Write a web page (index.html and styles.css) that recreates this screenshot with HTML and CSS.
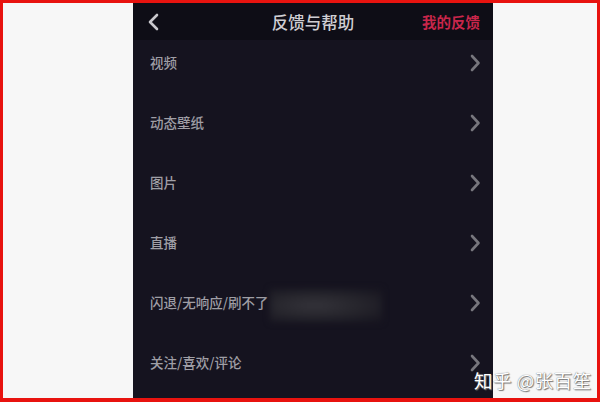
FILE: index.html
```html
<!DOCTYPE html>
<html lang="zh-CN">
<head>
    <meta charset="UTF-8">
    <meta name="viewport" content="width=device-width, initial-scale=1.0">
    <title>反馈与帮助</title>
    <link rel="stylesheet" href="styles.css">
</head>
<body>
    <div class="frame">
        <div class="phone">
            <!-- 顶部导航 -->
            <header class="topbar">
                <svg class="back" width="12" height="18" viewBox="0 0 12 18">
                    <path d="M10 2 L3 9 L10 16" fill="none" stroke="#c9c8cd" stroke-width="2.6" stroke-linecap="round" stroke-linejoin="round"/>
                </svg>
                <h1 class="title">反馈与帮助</h1>
                <span class="my-feedback">我的反馈</span>
            </header>

            <!-- 问题分类列表 -->
            <ul class="menu">
                <li class="menu-item"><span class="label">视频</span><svg class="arrow" viewBox="0 0 12 18"><path d="M3 2 L9.5 9 L3 16"/></svg></li>
                <li class="menu-item"><span class="label">动态壁纸</span><svg class="arrow" viewBox="0 0 12 18"><path d="M3 2 L9.5 9 L3 16"/></svg></li>
                <li class="menu-item"><span class="label">图片</span><svg class="arrow" viewBox="0 0 12 18"><path d="M3 2 L9.5 9 L3 16"/></svg></li>
                <li class="menu-item"><span class="label">直播</span><svg class="arrow" viewBox="0 0 12 18"><path d="M3 2 L9.5 9 L3 16"/></svg></li>
                <li class="menu-item"><span class="label">闪退/无响应/刷不了<span class="smudge"></span></span><svg class="arrow" viewBox="0 0 12 18"><path d="M3 2 L9.5 9 L3 16"/></svg></li>
                <li class="menu-item"><span class="label">关注/喜欢/评论</span><svg class="arrow" viewBox="0 0 12 18"><path d="M3 2 L9.5 9 L3 16"/></svg></li>
            </ul>
            <div class="bottom-line"></div>
        </div>
        <div class="watermark">知乎 @张百笙</div>
    </div>
</body>
</html>
```

FILE: styles.css
```css
body {
    margin: 0;
    padding: 0;
    font-family: "Noto Sans CJK SC", "Noto Sans", sans-serif;
}
.frame {
    position: relative;
    box-sizing: border-box;
    width: 600px;
    height: 402px;
    border: 3px solid #e8130f;
    border-bottom-width: 4px;
    background-color: #f7f7f7;
    padding-left: 130px;
    overflow: hidden;
}
.phone {
    width: 360px;
    height: 100%;
    background-color: #15131f;
    display: flex;
    flex-direction: column;
}
.topbar {
    height: 37px;
    flex-shrink: 0;
    background-color: #0e0d16;
    display: flex;
    align-items: center;
    position: relative;
    padding: 0 13px 0 14px;
}
.back {
    display: block;
}
.title {
    position: absolute;
    left: 0;
    right: 0;
    margin: 0;
    text-align: center;
    font-size: 16.5px;
    font-weight: 500;
    color: #cfced3;
    pointer-events: none;
}
.my-feedback {
    margin-left: auto;
    font-size: 14.5px;
    font-weight: 700;
    color: #c9264b;
}
.menu {
    list-style: none;
    margin: 0;
    padding: 0;
    flex: 1;
}
.menu-item {
    height: 60px;
    box-sizing: border-box;
    padding: 12px 12px 0 17px;
    display: flex;
    align-items: flex-start;
    justify-content: space-between;
}
.label {
    position: relative;
    font-size: 13.5px;
    line-height: 20px;
    font-weight: 500;
    color: #9f9ea5;
}
.smudge {
    position: absolute;
    left: 120px;
    top: -3px;
    width: 112px;
    height: 33px;
    background: radial-gradient(ellipse at 40% 50%, #34333a 0%, #27262d 45%, #17151f 100%);
    filter: blur(3px);
}
.arrow {
    width: 12px;
    height: 18px;
    margin-top: 2px;
    fill: none;
    stroke: #77767d;
    stroke-width: 2.6;
    stroke-linecap: round;
    stroke-linejoin: round;
}
.bottom-line {
    height: 4px;
    background-color: #0c0b11;
}
.watermark {
    position: absolute;
    left: 471px;
    top: 364px;
    font-size: 18.5px;
    color: #ffffff;
    letter-spacing: 0.5px;
    text-shadow: 0 0 1px #555, 1px 1px 1px #777;
}
```
